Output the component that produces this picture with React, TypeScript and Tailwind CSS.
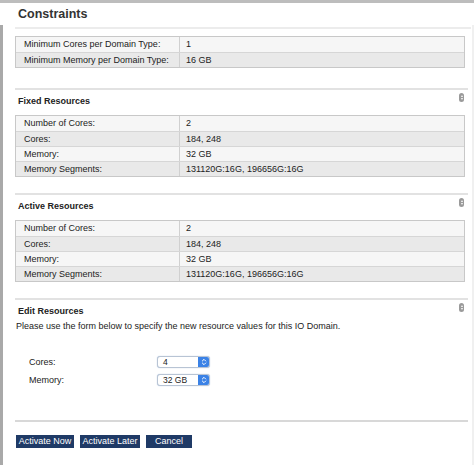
import { ChevronsUpDown } from "lucide-react";

type Row = [string, string];

const constraints: Row[] = [
  ["Minimum Cores per Domain Type:", "1"],
  ["Minimum Memory per Domain Type:", "16 GB"],
];

const resources: Row[] = [
  ["Number of Cores:", "2"],
  ["Cores:", "184, 248"],
  ["Memory:", "32 GB"],
  ["Memory Segments:", "131120G:16G, 196656G:16G"],
];

function InfoTable({ rows }: { rows: Row[] }) {
  return (
    <div className="mr-[7px] border border-[#c8c8c8] leading-[11px]">
      {rows.map(([label, value], i) => (
        <div
          key={label}
          className={`flex h-[15px] items-center ${i > 0 ? "border-t border-[#d6d6d6]" : ""} ${
            i % 2 === 0 ? "bg-[#f6f6f6]" : "bg-[#e9e9e9]"
          }`}
        >
          <div className="flex h-full w-[164px] items-center border-r border-[#d0d0d0] pl-[8px]">{label}</div>
          <div className="pl-[6px]">{value}</div>
        </div>
      ))}
    </div>
  );
}

function Spinner() {
  return (
    <div className="flex h-[9px] w-[5px] flex-col items-center justify-center rounded-full bg-[#9a9a9a]">
      <div className="h-0 w-0 border-x-[1.5px] border-b-[2px] border-x-transparent border-b-white" />
      <div className="mt-[1px] h-0 w-0 border-x-[1.5px] border-t-[2px] border-x-transparent border-t-white" />
    </div>
  );
}

function SectionHeader({ title }: { title: string }) {
  return (
    <div>
      <div className="mr-[4px] h-[2px] bg-[#e2e2e2]" />
      <div className="flex justify-between">
        <div className="pl-[3px] pt-[6px] font-bold leading-[11px]">{title}</div>
        <div className="mr-[8px] mt-[3px]">
          <Spinner />
        </div>
      </div>
    </div>
  );
}

function Select({ value }: { value: string }) {
  return (
    <div className="flex h-[12px] w-[53px] items-center rounded-[3px] border border-[#b8c4d4] bg-white shadow-[0_0_1px_#9fb6d6]">
      <div className="flex-1 pl-[5px] text-[8.5px] leading-[10px]">{value}</div>
      <div className="flex h-full w-[11px] items-center justify-center rounded-r-[2px] bg-[#3b82e6] text-white">
        <ChevronsUpDown size={8} strokeWidth={3} />
      </div>
    </div>
  );
}

function ActionButton({ label, width }: { label: string; width: string }) {
  return (
    <button className={`h-[13px] ${width} bg-[#1f3a66] text-[9px] font-medium leading-[11px] text-white`}>
      {label}
    </button>
  );
}

export default function App() {
  return (
    <div
      className="h-[465px] w-[474px] overflow-hidden bg-white text-[9px] text-[#222]"
      style={{ fontFamily: '"Liberation Sans", Arial, sans-serif' }}
    >
      <div className="h-[3px] bg-[#bdbdbd]" />
      <div className="flex h-[22px] items-center pl-[18px] text-[12.5px] font-bold text-[#333]">Constraints</div>
      <div className="flex h-[440px] border-l-[3px] border-[#a9a9a9]">
        <div className="flex-1 pl-[12px]">
          <div className="mr-[1px] mt-[2px] h-[2px] bg-[#ececec]" />
          <div className="mt-[7px]">
            <InfoTable rows={constraints} />
          </div>

          <div className="mt-[20px]">
            <SectionHeader title="Fixed Resources" />
          </div>
          <div className="mt-[8px]">
            <InfoTable rows={resources} />
          </div>

          <div className="mt-[16px]">
            <SectionHeader title="Active Resources" />
          </div>
          <div className="mt-[8px]">
            <InfoTable rows={resources} />
          </div>

          <div className="mt-[16px]">
            <SectionHeader title="Edit Resources" />
          </div>
          <div className="pl-[1px] pt-[4px] leading-[11px]">
            Please use the form below to specify the new resource values for this IO Domain.
          </div>

          <div className="mt-[24px] flex flex-col gap-[6px] pl-[14px]">
            <div className="flex items-center">
              <div className="w-[128px] leading-[11px]">Cores:</div>
              <Select value="4" />
            </div>
            <div className="flex items-center">
              <div className="w-[128px] leading-[11px]">Memory:</div>
              <Select value="32 GB" />
            </div>
          </div>

          <div className="mr-[4px] mt-[34px] h-[2px] bg-[#d8d8d8]" />
          <div className="mt-[13px] flex gap-[6px] pl-[1px]">
            <ActionButton label="Activate Now" width="w-[58px]" />
            <ActionButton label="Activate Later" width="w-[60px]" />
            <ActionButton label="Cancel" width="w-[46px]" />
          </div>
        </div>
        <div className="w-[2px] bg-[#f0f0f0]" />
      </div>
    </div>
  );
}
